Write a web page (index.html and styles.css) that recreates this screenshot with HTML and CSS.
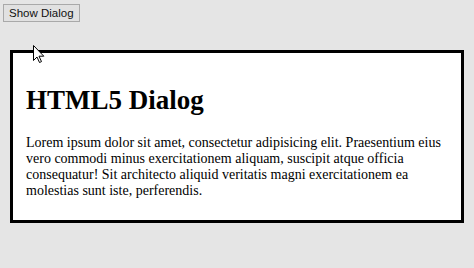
FILE: index.html
```html
<!DOCTYPE html>
<html>
<head>
<meta charset="utf-8">
<link rel="stylesheet" href="styles.css">
</head>
<body>
<div class="page">
  <button class="show-btn">Show Dialog</button>
  <dialog class="dlg" open>
    <h1 class="dlg-title">HTML5 Dialog</h1>
    <p class="dlg-text">Lorem ipsum dolor sit amet, consectetur adipisicing elit. Praesentium eius vero commodi minus exercitationem aliquam, suscipit atque officia consequatur! Sit architecto aliquid veritatis magni exercitationem ea molestias sunt iste, perferendis.</p>
  </dialog>
  <svg class="cursor" width="12" height="19" viewBox="0 0 12 19">
    <path d="M0.5 0.5 L0.5 15.5 L4 12 L6.5 17.5 L8.5 16.6 L6 11.2 L10.8 11.2 Z" fill="#fff" stroke="#000" stroke-width="1" stroke-linejoin="miter"/>
  </svg>
</div>
</body>
</html>
```
FILE: styles.css
```css
html, body {
  margin: 0;
  padding: 0;
  background: #e5e5e5;
}
.page {
  position: relative;
  width: 474px;
  height: 268px;
  padding: 4px 0 0 3px;
  box-sizing: border-box;
}
.show-btn {
  display: block;
  height: 18px;
  padding: 0 5px;
  font-family: "Liberation Sans", Arial, sans-serif;
  font-size: 11.5px;
  color: #111;
  background: #e1e1e1;
  border: 1px solid #a9a9a9;
  border-radius: 0;
}
.dlg {
  position: static;
  display: block;
  margin: 28px 0 0 7px;
  width: 454px;
  height: 173px;
  box-sizing: border-box;
  padding: 12px 13px;
  border: 3px solid #000;
  background: #fff;
  color: #000;
  font-family: "Liberation Serif", "Times New Roman", serif;
}
.dlg-title {
  margin: 19px 0 19px;
  font-size: 27px;
  line-height: 32px;
  font-weight: bold;
}
.dlg-text {
  margin: 0;
  font-size: 14px;
  line-height: 16px;
}
.cursor {
  position: absolute;
  left: 33px;
  top: 45px;
}
```
